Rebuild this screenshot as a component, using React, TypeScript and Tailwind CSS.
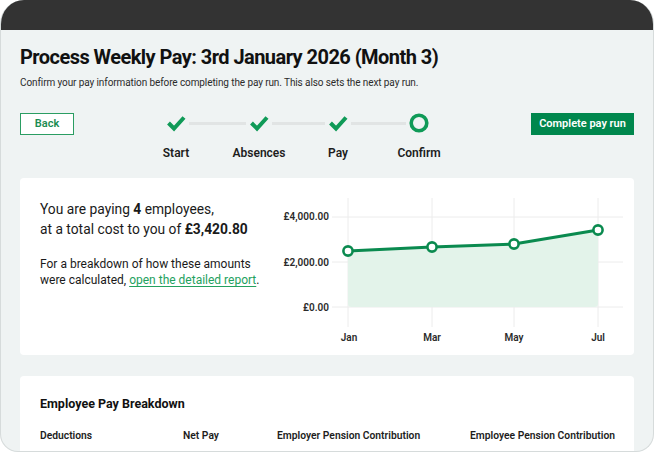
import React from "react";

const GREEN = "#0a8a4f";

function Check() {
  return (
    <svg width="20" height="20" viewBox="0 0 20 20">
      <polyline points="2.5,10 8,15.5 18,4.5" fill="none" stroke="#0f9a57" strokeWidth="4" />
    </svg>
  );
}

function Ring() {
  return (
    <svg width="20" height="20" viewBox="0 0 20 20">
      <circle cx="10" cy="10" r="7.8" fill="none" stroke="#0f9a57" strokeWidth="3.6" />
    </svg>
  );
}

function Step({ label, done }: { label: string; done: boolean }) {
  return (
    <div className="w-[20px] flex flex-col items-center">
      {done ? <Check /> : <Ring />}
      <div className="mt-[13px] whitespace-nowrap text-[12px] leading-[14px] font-semibold text-[#1d1d1d]">
        {label}
      </div>
    </div>
  );
}

function Line({ w }: { w: string }) {
  return <div className={`${w} mx-[3px] mt-[9px] h-[3px] bg-[#e1e4e4]`} />;
}

function Chart() {
  const pts: [number, number][] = [
    [68, 73],
    [152, 69],
    [234, 66],
    [318, 52],
  ];
  const linePath = pts.map((p, i) => `${i ? "L" : "M"}${p[0]},${p[1]}`).join(" ");
  const area = `M68,73 L152,69 L234,66 L318,52 L318,126 Q318,129 315,129 L71,129 Q68,129 68,126 Z`;
  const font = "Roboto, 'Liberation Sans', sans-serif";
  return (
    <svg width="354" height="177" viewBox="0 0 354 177" className="shrink-0">
      {[39, 84, 129].map((y) => (
        <line key={y} x1="52" x2="343" y1={y} y2={y} stroke="#ececec" strokeWidth="1" />
      ))}
      {[68, 152, 234, 318].map((x) => (
        <line key={x} x1={x} x2={x} y1="20" y2="149" stroke="#ececec" strokeWidth="1" />
      ))}
      <path d={area} fill="#e3f3ea" />
      <path d={linePath} fill="none" stroke={GREEN} strokeWidth="3" strokeLinejoin="round" />
      {pts.map((p, i) => (
        <circle key={i} cx={p[0]} cy={p[1]} r="4.6" fill="#fff" stroke={GREEN} strokeWidth="2.6" />
      ))}
      <g fontFamily={font} fontSize="10" fontWeight="600" fill="#2b2b2b" textAnchor="end">
        <text x="49" y="42">£4,000.00</text>
        <text x="49" y="87.5">£2,000.00</text>
        <text x="49" y="133">£0.00</text>
      </g>
      <g fontFamily={font} fontSize="10" fontWeight="600" fill="#2b2b2b" textAnchor="middle">
        <text x="69" y="163">Jan</text>
        <text x="152" y="163">Mar</text>
        <text x="234" y="163">May</text>
        <text x="318" y="163">Jul</text>
      </g>
    </svg>
  );
}

export default function App() {
  return (
    <div
      className="w-[654px] h-[452px] overflow-hidden rounded-t-[24px] rounded-b-[18px] border border-t-0 border-[#d6dbdb] bg-[#eff3f3] flex flex-col"
      style={{ fontFamily: "Roboto, 'Liberation Sans', sans-serif" }}
    >
      <div className="h-[30px] shrink-0 bg-[#333333]" />
      <div className="px-[19px] flex flex-col">
        <h1 className="mt-[15px] text-[20px] leading-[24px] font-bold tracking-[-0.55px] text-[#111]">
          Process Weekly Pay: 3rd January 2026 (Month 3)
        </h1>
        <p className="mt-[7px] text-[10px] leading-[14px] tracking-[-0.1px] text-[#2b2b2b]">
          Confirm your pay information before completing the pay run. This also sets the next pay run.
        </p>

        <div className="mt-[23px] flex items-start">
          <button className="w-[54px] h-[22px] border border-[#2a9d62] bg-white text-[11px] font-semibold text-[#1c8c52]">
            Back
          </button>
          <div className="ml-[92px] flex items-start">
            <Step label="Start" done />
            <Line w="w-[57px]" />
            <Step label="Absences" done />
            <Line w="w-[53px]" />
            <Step label="Pay" done />
            <Line w="w-[55px]" />
            <Step label="Confirm" done={false} />
          </div>
          <button className="ml-auto w-[103px] h-[22px] bg-[#00874d] text-[11px] font-semibold text-white">
            Complete pay run
          </button>
        </div>

        <div className="mt-[18px] h-[177px] rounded-[4px] bg-white flex">
          <div className="flex-1 pl-[20px] pt-[21px]">
            <p className="text-[13.8px] leading-[20px] text-[#1a1a1a]">
              You are paying <b>4</b> employees,
              <br />
              at a total cost to you of <b>£3,420.80</b>
            </p>
            <p className="mt-[17px] text-[12px] leading-[16px] text-[#1a1a1a]">
              For a breakdown of how these amounts
              <br />
              were calculated,{" "}
              <a className="text-[#23a15e] underline underline-offset-2">open the detailed report</a>.
            </p>
          </div>
          <Chart />
        </div>

        <div className="mt-[21px] h-[120px] rounded-[4px] bg-white px-[20px] pt-[20px]">
          <div className="text-[12.5px] leading-[16px] font-bold text-[#111]">Employee Pay Breakdown</div>
          <div className="mt-[17px] grid grid-cols-[143px_94px_193px_1fr] whitespace-nowrap text-[10.3px] leading-[14px] font-semibold text-[#1d1d1d]">
            <div>Deductions</div>
            <div>Net Pay</div>
            <div>Employer Pension Contribution</div>
            <div>Employee Pension Contribution</div>
          </div>
        </div>
      </div>
    </div>
  );
}
